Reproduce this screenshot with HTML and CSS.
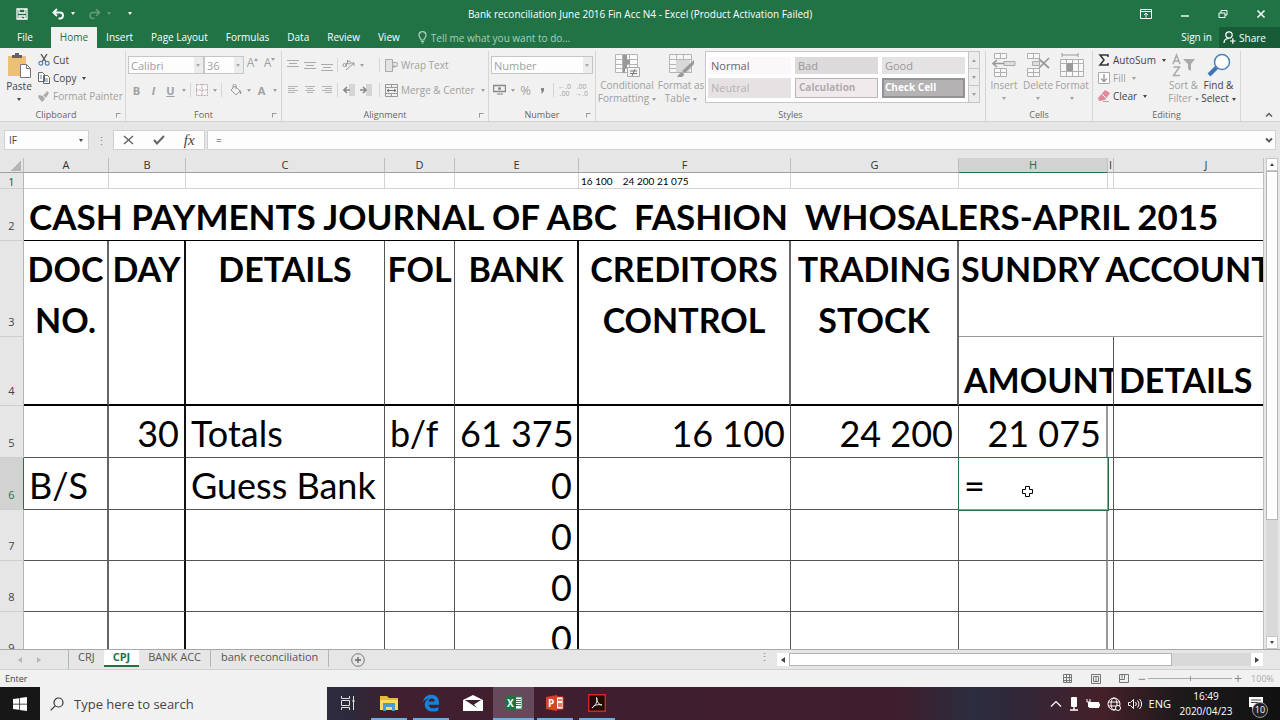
FILE: index.html
```html
<!DOCTYPE html>
<html lang="en">
<head>
    <meta charset="UTF-8">
    <meta name="viewport" content="width=device-width, initial-scale=1.0">
    <title>Bank reconciliation June 2016 Fin Acc N4 - Excel</title>
    <link rel="stylesheet" href="styles.css">
</head>
<body>
    <!-- Title bar -->
    <header class="titlebar">
        <div class="quick">
            <button aria-label="Save"><svg width="12" height="12" viewBox="0 0 12 12"><path d="M1 1h10v10H1z M3 1v4h6V1 M3 11V8h6v3 M5 9v2" fill="none" stroke="#fff" stroke-width="1.3"/></svg></button>
            <button aria-label="Undo" class="undo"><svg width="13" height="12" viewBox="0 0 13 12"><path d="M1.500 4.500h6.500a3 3 0 0 1 0 6H6.500M5 1L1.500 4.500L5 8" fill="none" stroke="#fff" stroke-width="1.900"/></svg><span class="caret"></span></button>
            <button aria-label="Redo" class="faded"><svg width="13" height="12" viewBox="0 0 13 12"><path d="M11.500 4.500H5a3 3 0 0 0 0 6h1.500M8 1l3.500 3.500L8 8" fill="none" stroke="#fff" stroke-width="1.500"/></svg><span class="caret"></span></button>
            <button aria-label="Customize toolbar" class="custom"><span class="caret"></span></button>
        </div>
        <div class="doc-title">Bank reconciliation June 2016 Fin Acc N4 - Excel (Product Activation Failed)</div>
        <div class="window-buttons">
            <button aria-label="Ribbon options"><svg width="12" height="10" viewBox="0 0 12 10"><path d="M.5.5h11v9H.5zM.5 2.500h11M6 8.500V4M4 6l2-2 2 2" fill="none" stroke="#fff"/></svg></button>
            <button aria-label="Minimize"><svg width="10" height="10" viewBox="0 0 10 10"><path d="M1 7h8" stroke="#fff" stroke-width="1.400"/></svg></button>
            <button aria-label="Restore"><svg width="10" height="10" viewBox="0 0 10 10"><path d="M1 4h6v4.500H1zM3 4V1.500h6V6H7" fill="none" stroke="#fff"/></svg></button>
            <button aria-label="Close"><svg width="10" height="10" viewBox="0 0 10 10"><path d="M1.500 1.500l7 7M8.500 1.500l-7 7" stroke="#fff" stroke-width="1.500"/></svg></button>
        </div>
    </header>

    <!-- Ribbon tabs -->
    <nav class="tabs">
        <a href="#" class="file">File</a>
        <a href="#" class="active">Home</a>
        <a href="#">Insert</a>
        <a href="#">Page Layout</a>
        <a href="#">Formulas</a>
        <a href="#">Data</a>
        <a href="#">Review</a>
        <a href="#">View</a>
        <label class="tell-me">
            <svg width="9" height="13" viewBox="0 0 9 13"><path d="M3 9C3 7 1 6.500 1 4.200a3.500 3.500 0 0 1 7 0C8 6.500 6 7 6 9zM3 10.500h3M3.500 12h2" fill="none" stroke="#a9cfb9" stroke-width="1.200"/></svg>
            <input type="text" placeholder="Tell me what you want to do...">
        </label>
        <a href="#" class="sign-in">Sign in</a>
        <button class="share"><svg width="13" height="13" viewBox="0 0 13 13"><circle cx="6" cy="4" r="3.200" fill="none" stroke="#fff" stroke-width="1.200"/><path d="M1 12c0-3 1.500-4.500 5-4.500M7 10h5.500M9.800 7.300v5.400" fill="none" stroke="#fff" stroke-width="1.200"/></svg>Share</button>
    </nav>

    <!-- Ribbon -->
    <section class="ribbon">
        <div class="group clipboard">
            <div class="group-body">
                <button class="big">
                    <svg width="25" height="27" viewBox="0 0 25 27"><path d="M1 4h18v20H1z" fill="#ecc173"/><path d="M5 3h3V1h4v2h3v3H5z" fill="#66615d"/><path d="M13.500 12.500h6l4 4v9h-10z" fill="#fff" stroke="#777"/><path d="M19.500 12.500v4h4" fill="none" stroke="#777"/></svg>
                    <span>Paste</span><span class="caret"></span>
                </button>
                <div class="stack">
                    <button><svg width="12" height="12" viewBox="0 0 12 12"><path d="M3 0l5 8M9 0L4 8" stroke="#555" stroke-width="1.400"/><circle cx="2.800" cy="9.300" r="1.900" fill="none" stroke="#5b84b1" stroke-width="1.200"/><circle cx="9.200" cy="9.300" r="1.900" fill="none" stroke="#5b84b1" stroke-width="1.200"/></svg>Cut</button>
                    <button><svg width="12" height="12" viewBox="0 0 12 12"><path d="M.5.5h4l2 2v7h-6zM5.500 3.500h4l2 2v6h-6z" fill="#fff" stroke="#666"/><path d="M2 4h2M2 6h2M7 7h3M7 9h3" stroke="#5b84b1"/></svg>Copy<span class="caret"></span></button>
                    <button disabled><svg width="12" height="12" viewBox="0 0 12 12"><path d="M1 5l4 1 2 3-3 3-4-5zM5 5l3 3 1-2L11 3 9 1 7 4z" fill="#aaa"/></svg>Format Painter</button>
                </div>
            </div>
            <div class="group-name">Clipboard<i class="launcher"></i></div>
        </div>

        <div class="group font dim">
            <div class="group-body rows">
                <div class="line">
                    <span class="picker font-name"><select aria-label="Font" disabled><option>Calibri</option></select></span>
                    <span class="picker font-size"><select aria-label="Font size" disabled><option>36</option></select></span>
                    <button class="tool grow" disabled>A<i class="caret up"></i></button>
                    <button class="tool grow" disabled>A<i class="caret"></i></button>
                </div>
                <div class="line">
                    <button class="tool" disabled><b>B</b></button>
                    <button class="tool" disabled><b><i>I</i></b></button>
                    <button class="tool" disabled><b><u>U</u></b></button>
                    <span class="caret"></span>
                    <span class="rule"></span>
                    <button class="tool" disabled aria-label="Borders"><svg width="12" height="12" viewBox="0 0 12 12"><path d="M.5.5h11v11H.5zM6 0v12M0 6h12" fill="#faf4f6" stroke="#b9a9ae" stroke-dasharray="2 1"/></svg></button>
                    <span class="caret"></span>
                    <span class="rule"></span>
                    <button class="tool fill" disabled aria-label="Fill colour"><svg width="12" height="12" viewBox="0 0 12 12"><path d="M5 2l5 5-4 4-5-5zM3 4V1.500a1.500 1.500 0 0 1 3 0V5" fill="none" stroke="#999"/><path d="M10 6c2 2 1.500 4 .5 4s-1-1-.5-4z" fill="#999"/></svg></button>
                    <span class="caret"></span>
                    <button class="tool" disabled><b>A</b></button>
                    <span class="caret"></span>
                </div>
            </div>
            <div class="group-name">Font<i class="launcher"></i></div>
        </div>

        <div class="group alignment dim">
            <div class="group-body rows">
                <div class="line">
                    <button class="tool" disabled aria-label="Top align"><svg width="12" height="12" viewBox="0 0 12 12"><path d="M0 1.500h12M2 4.500h8M0 7.500h12" stroke="#aaa"/></svg></button>
                    <button class="tool" disabled aria-label="Middle align"><svg width="12" height="12" viewBox="0 0 12 12"><path d="M0 3.500h12M2 6.500h8M0 9.500h12" stroke="#aaa"/></svg></button>
                    <button class="tool" disabled aria-label="Bottom align"><svg width="12" height="12" viewBox="0 0 12 12"><path d="M0 5.500h12M2 8.500h8M0 11.500h12" stroke="#aaa"/></svg></button>
                    <span class="rule"></span>
                    <button class="tool" disabled aria-label="Orientation"><svg width="13" height="12" viewBox="0 0 13 12"><path d="M4 11l8-7M9 4h3v3" fill="none" stroke="#999"/><circle cx="2.500" cy="6" r="1.500" fill="none" stroke="#999"/><path d="M4.500 4v3.500M5.500 1v4" stroke="#999"/><circle cx="7" cy="3.500" r="1.500" fill="none" stroke="#999"/></svg></button>
                    <span class="caret"></span>
                    <span class="rule wide"></span>
                    <button class="text-tool" disabled><svg width="13" height="13" viewBox="0 0 13 13"><path d="M.5.5h7v12h-7zM7.500 3.500H11a1.500 1.500 0 0 1 0 4H8M9.500 6L8 7.500 9.500 9" fill="#e3e3e3" stroke="#aaa"/></svg>Wrap Text</button>
                </div>
                <div class="line">
                    <button class="tool" disabled aria-label="Align left"><svg width="12" height="12" viewBox="0 0 12 12"><path d="M1 2.500h10M1 4.500h7M1 6.500h10M1 8.500h7" stroke="#b5b5b5"/></svg></button>
                    <button class="tool" disabled aria-label="Center"><svg width="12" height="12" viewBox="0 0 12 12"><path d="M1 2.500h10M3 4.500h6M1 6.500h10M3 8.500h6" stroke="#b5b5b5"/></svg></button>
                    <button class="tool" disabled aria-label="Align right"><svg width="12" height="12" viewBox="0 0 12 12"><path d="M1 2.500h10M4 4.500h7M1 6.500h10M4 8.500h7" stroke="#b5b5b5"/></svg></button>
                    <span class="rule"></span>
                    <button class="tool" disabled aria-label="Decrease indent"><svg width="12" height="12" viewBox="0 0 12 12"><path d="M6 0h6v12H6z" fill="#d5d5d5"/><path d="M7 6H1M4 3L1 6l3 3" fill="none" stroke="#888" stroke-width="1.600"/></svg></button>
                    <button class="tool" disabled aria-label="Increase indent"><svg width="12" height="12" viewBox="0 0 12 12"><path d="M6 0h6v12H6z" fill="#d5d5d5"/><path d="M0 6h6M3 3l3 3-3 3" fill="none" stroke="#888" stroke-width="1.600"/></svg></button>
                    <span class="rule after-indent"></span>
                    <button class="text-tool" disabled><svg width="13" height="13" viewBox="0 0 13 13"><path d="M.5.5h12v12H.5zM.5 3.500h12M.5 9.500h12M6.500.5v3M6.500 9.500v3" fill="none" stroke="#999"/><path d="M2 6.500h9M4 5L2 6.500 4 8M9 5l2 1.500L9 8" fill="none" stroke="#777"/></svg>Merge &amp; Center<span class="caret"></span></button>
                </div>
            </div>
            <div class="group-name">Alignment<i class="launcher"></i></div>
        </div>

        <div class="group number dim">
            <div class="group-body rows">
                <div class="line"><span class="picker format"><select aria-label="Number format" disabled><option>Number</option></select></span></div>
                <div class="line">
                    <button class="tool" disabled aria-label="Currency"><svg width="13" height="12" viewBox="0 0 13 12"><path d="M.5 1.500h12v6H.5z" fill="none" stroke="#888" stroke-width="1.400"/><circle cx="6.500" cy="4.500" r="1.500" fill="#888"/><path d="M4 9h6v2H4z" fill="#bbb"/></svg></button>
                    <span class="caret"></span>
                    <button class="tool percent" disabled>%</button>
                    <button class="tool" disabled aria-label="Comma style"><svg width="5" height="7" viewBox="0 0 5 7"><path d="M1 1h3v3L2 6.500H1L2 4H1z" fill="#888"/></svg></button>
                    <span class="rule"></span>
                    <button class="tool decimals" disabled><span>←.0</span><span>.00</span></button>
                    <button class="tool decimals" disabled><span>.00</span><span>→.0</span></button>
                </div>
            </div>
            <div class="group-name">Number<i class="launcher"></i></div>
        </div>

        <div class="group styles dim">
            <div class="group-body">
                <button class="big cond" disabled>
                    <svg width="25" height="25" viewBox="0 0 25 25"><path d="M.5 1.500h22v18H.5zM.5 6.500h22M.5 11.500h22M.5 15.500h22M7.500 1v19M14.500 1v19" fill="#fafafa" stroke="#b5b5b5"/><path d="M8 2h4v5h3v4h-3v4h-2v5H8z" fill="#999"/><path d="M12.500 14.500h12v9h-12z" fill="#f4f4f4" stroke="#aaa"/><path d="M15 18h7M15 20.500h7M20 16l-3 7" stroke="#777"/></svg>
                    <span>Conditional<br>Formatting<i class="caret"></i></span>
                </button>
                <button class="big table-style" disabled>
                    <svg width="25" height="25" viewBox="0 0 25 25"><path d="M.5 1.500h22v18H.5zM.5 6.500h22M.5 11.500h22M.5 15.500h22M7.500 1v19M14.500 1v19" fill="#f6f6f6" stroke="#b5b5b5"/><path d="M7 7h14v12H7z" fill="#d8d8d8"/><path d="M25 7v4l-9 9-3-2zM8 24c2-4 4-5 6-4s1 3-1 4z" fill="#999"/></svg>
                    <span>Format as<br>Table<i class="caret"></i></span>
                </button>
                <div class="gallery">
                    <div class="swatches">
                        <button class="normal">Normal</button>
                        <button class="bad">Bad</button>
                        <button class="good">Good</button>
                        <button class="neutral">Neutral</button>
                        <button class="calculation">Calculation</button>
                        <button class="check">Check Cell</button>
                    </div>
                    <div class="gallery-scroll">
                        <button aria-label="Up"><i class="caret up"></i></button>
                        <button aria-label="Down"><i class="caret"></i></button>
                        <button aria-label="More"><i class="caret"></i></button>
                    </div>
                </div>
            </div>
            <div class="group-name">Styles</div>
        </div>

        <div class="group cells dim">
            <div class="group-body">
                <button class="big" disabled>
                    <svg width="24" height="25" viewBox="0 0 24 25"><path d="M2.500.5h12v5h-12zM8.500.5v5M2.500 15.500h12v8h-12zM8.500 15.500v8M2.500 19.500h12" fill="#f8f8f8" stroke="#b0b0b0"/><path d="M12 8.500h11v4H12z" fill="#ddd" stroke="#aaa"/><path d="M12 10.500H2M5 7l-4 3.500L5 14" fill="none" stroke="#999" stroke-width="1.600"/></svg>
                    <span>Insert</span><span class="caret"></span>
                </button>
                <button class="big" disabled>
                    <svg width="24" height="25" viewBox="0 0 24 25"><path d="M1.500.5h12v5h-12zM7.500.5v5M1.500 15.500h12v8h-12zM7.500 15.500v8M1.500 19.500h12" fill="#f8f8f8" stroke="#b0b0b0"/><path d="M6.500 8.500h7v4h-7z" fill="#ddd" stroke="#aaa"/><path d="M13 6l10 9M23 5L13 15" stroke="#999" stroke-width="1.700"/></svg>
                    <span>Delete</span><span class="caret"></span>
                </button>
                <button class="big" disabled>
                    <svg width="24" height="25" viewBox="0 0 24 25"><path d="M.5 6.500h23v17H.5zM.5 10.500h23M.5 18.500h23M6.500 6.500v17M12.500 6.500v17M18.500 6.500v17" fill="#f8f8f8" stroke="#b0b0b0"/><path d="M7 10h6v8H7z" fill="#999"/><path d="M2 2h16M2 0v4M18 0v4" stroke="#999"/></svg>
                    <span>Format</span><span class="caret"></span>
                </button>
            </div>
            <div class="group-name">Cells</div>
        </div>

        <div class="group editing">
            <div class="group-body">
                <div class="stack">
                    <button><svg width="12" height="12" viewBox="0 0 12 12"><path d="M10 3V1H2l4 5-4 5h8V9" fill="none" stroke="#333" stroke-width="1.500"/></svg>AutoSum<span class="caret"></span></button>
                    <button disabled><svg width="12" height="12" viewBox="0 0 12 12"><path d="M.5.5h11v11H.5z" fill="#fff" stroke="#aaa"/><path d="M6 2v7M3 6.500l3 3 3-3" fill="none" stroke="#999" stroke-width="1.400"/></svg>Fill<span class="caret"></span></button>
                    <button><svg width="12" height="12" viewBox="0 0 12 12"><path d="M7 0l5 3-5 7-6 1-1-3z" fill="#e08a9c"/><path d="M4 4l4 4" stroke="#fff"/><path d="M5 11.500h6" stroke="#aaa"/></svg>Clear<span class="caret"></span></button>
                </div>
                <button class="big sort" disabled>
                    <svg width="24" height="25" viewBox="0 0 24 25"><path d="M1 11L4.500 2 8 11M2.200 8h4.600M1.500 14h6l-6 8.500h6.500" fill="none" stroke="#aaa" stroke-width="1.500"/><path d="M11 6h12l-4 5v7l-3-2v-5z" fill="#aaa"/></svg>
                    <span>Sort &amp;<br>Filter<i class="caret"></i></span>
                </button>
                <button class="big find">
                    <svg width="24" height="25" viewBox="0 0 24 25"><path d="M10 14L2 22" stroke="#3f77b5" stroke-width="4"/><circle cx="15" cy="9" r="7.500" fill="#fff" stroke="#4a80bb" stroke-width="1.500"/></svg>
                    <span>Find &amp;<br>Select<i class="caret"></i></span>
                </button>
            </div>
            <div class="group-name">Editing</div>
        </div>
        <button class="collapse" aria-label="Collapse ribbon"><svg width="8" height="6" viewBox="0 0 8 6"><path d="M1 4.500l3-3 3 3" fill="none" stroke="#555" stroke-width="1.400"/></svg></button>
    </section>

    <!-- Formula bar -->
    <section class="formula-bar">
        <div class="name-box"><input type="text" aria-label="Name box" value="IF"><span class="caret"></span></div>
        <span class="grip">⋮</span>
        <div class="formula-buttons">
            <button aria-label="Cancel"><svg width="11" height="10" viewBox="0 0 11 10"><path d="M1 1l9 8M10 1L1 9" stroke="#666" stroke-width="1.500"/></svg></button>
            <button aria-label="Enter"><svg width="12" height="10" viewBox="0 0 12 10"><path d="M1 5l3 3.500L11 1" fill="none" stroke="#666" stroke-width="2"/></svg></button>
            <button class="fx"><i>fx</i></button>
        </div>
        <div class="formula"><input type="text" aria-label="Formula" value="="><svg width="8" height="6" viewBox="0 0 8 6"><path d="M1 1.500l3 3 3-3" fill="none" stroke="#555" stroke-width="1.800"/></svg></div>
    </section>

    <!-- Worksheet -->
    <main class="sheet">
        <div class="grid">
            <table>
                <colgroup>
                    <col class="c-head"><col class="c-a"><col class="c-b"><col class="c-c"><col class="c-d"><col class="c-e"><col class="c-f"><col class="c-g"><col class="c-h"><col class="c-i"><col>
                </colgroup>
                <thead>
                    <tr><th class="corner"></th><th>A</th><th>B</th><th>C</th><th>D</th><th>E</th><th>F</th><th>G</th><th class="on">H</th><th>I</th><th>J</th></tr>
                </thead>
                <tbody>
                    <tr class="r1"><th>1</th><td></td><td></td><td></td><td></td><td></td><td>16 100    24 200 21 075</td><td></td><td></td><td></td><td></td></tr>
                    <tr class="r2"><th>2</th><td colspan="10">CASH PAYMENTS JOURNAL OF ABC  FASHION  WHOSALERS-APRIL 2015</td></tr>
                    <tr class="r3"><th>3</th><td rowspan="2" class="gray">DOC<br>NO.</td><td rowspan="2" class="thick">DAY</td><td rowspan="2">DETAILS</td><td rowspan="2">FOL</td><td rowspan="2" class="thick">BANK</td><td rowspan="2" class="gray">CREDITORS<br>CONTROL</td><td rowspan="2" class="gray">TRADING<br>STOCK</td><td colspan="3" class="sundry">SUNDRY ACCOUNTS</td></tr>
                    <tr class="r4"><th>4</th><td colspan="2">AMOUNT</td><td>DETAILS</td></tr>
                    <tr class="tall"><th>5</th><td class="gray"></td><td class="num thick">30</td><td>Totals</td><td>b/f</td><td class="num thick">61 375</td><td class="num">16 100</td><td class="num">24 200</td><td class="num double">21 075</td><td></td><td></td></tr>
                    <tr class="tall"><th class="on">6</th><td class="gray">B/S</td><td class="thick"></td><td>Guess Bank</td><td></td><td class="num thick">0</td><td></td><td></td><td class="editing-cell">=<svg class="pointer" width="11" height="11" viewBox="0 0 11 11"><path d="M3.500.5h4v3h3v4h-3v3h-4v-3h-3v-4h3z" fill="#fff" stroke="#000"/></svg></td><td></td><td></td></tr>
                    <tr><th>7</th><td class="gray"></td><td class="thick"></td><td></td><td></td><td class="num thick">0</td><td></td><td></td><td class="double"></td><td></td><td></td></tr>
                    <tr><th>8</th><td class="gray"></td><td class="thick"></td><td></td><td></td><td class="num thick">0</td><td></td><td></td><td class="double"></td><td></td><td></td></tr>
                    <tr><th>9</th><td class="gray"></td><td class="thick"></td><td></td><td></td><td class="num thick">0</td><td></td><td></td><td class="double"></td><td></td><td></td></tr>
                </tbody>
            </table>
        </div>
        <div class="vscroll">
            <button aria-label="Scroll up"><i class="caret up"></i></button>
            <div class="vtrack"><div class="vthumb"></div></div>
            <button aria-label="Scroll down"><i class="caret"></i></button>
        </div>
    </main>

    <!-- Sheet tabs -->
    <footer class="sheet-tabs">
        <span class="nav-arrows"><i class="tri left"></i><i class="tri right"></i></span>
        <a href="#">CRJ</a>
        <a href="#" class="active">CPJ</a>
        <a href="#">BANK ACC</a>
        <a href="#" class="rec">bank reconciliation</a>
        <button class="add" aria-label="New sheet"><svg width="14" height="14" viewBox="0 0 14 14"><circle cx="7" cy="7" r="6.300" fill="none" stroke="#777"/><path d="M4 7h6M7 4v6" stroke="#666" stroke-width="1.300"/></svg></button>
        <span class="grip">⋮</span>
        <div class="hscroll">
            <button aria-label="Scroll left"><i class="tri left"></i></button>
            <div class="htrack"><div class="hthumb"></div></div>
            <button aria-label="Scroll right"><i class="tri right"></i></button>
        </div>
    </footer>

    <!-- Status bar -->
    <div class="status">
        <span class="mode">Enter</span>
        <button aria-label="Normal view"><svg width="10" height="10" viewBox="0 0 10 10"><path d="M.5.5h8v8h-8zM3.500.5v8M6.500.5v8M.5 3.500h8M.5 6.500h8" fill="none" stroke="#777"/></svg></button>
        <button aria-label="Page layout"><svg width="10" height="10" viewBox="0 0 10 10"><path d="M.5.5h9v9h-9zM2.500 2.500h5v5h-5zM4 4h2M4 6h2" fill="none" stroke="#777"/></svg></button>
        <button aria-label="Page break"><svg width="10" height="10" viewBox="0 0 10 10"><path d="M.5.5h9v8h-9zM.5 5.500h5M5.500 5.500v-5M3 .5v4" fill="none" stroke="#777"/></svg></button>
        <div class="zoom"><span>−</span><input type="range" aria-label="Zoom" min="10" max="190" value="100" disabled><span>+</span></div>
        <span class="percent-label">100%</span>
    </div>

    <!-- Windows taskbar -->
    <div class="taskbar">
        <button class="start" aria-label="Start"><svg width="14" height="14" viewBox="0 0 14 14"><path d="M0 2l6-.8v5.500H0zM6.700 1L14 0v6.700H6.700zM0 7.400h6v5.400L0 12zM6.700 7.400H14V14l-7.300-1z" fill="#fff"/></svg></button>
        <label class="search">
            <svg width="14" height="14" viewBox="0 0 14 14"><circle cx="8.500" cy="5.500" r="4.500" fill="none" stroke="#333" stroke-width="1.200"/><path d="M5.300 8.700L.7 13.300" stroke="#333" stroke-width="1.200"/></svg>
            <input type="text" placeholder="Type here to search">
        </label>
        <button class="app" aria-label="Task view"><svg width="15" height="14" viewBox="0 0 15 14"><path d="M1.500 0v2.500h8V0M1.500 4.500h8v5h-8zM1.500 14v-2.500h8V14M13.500 0v14M12 5h3" fill="none" stroke="#ddd"/></svg></button>
        <button class="app open" aria-label="File Explorer"><svg width="20" height="18" viewBox="0 0 20 18"><path d="M1 2h7l2 2h9v12H1z" fill="#e9b83f"/><path d="M1 6h18v10H1z" fill="#fbd867"/><path d="M4 17V9h12v8h-3v-4H7v4z" fill="#4b9bd0"/></svg></button>
        <button class="app open" aria-label="Edge"><svg width="18" height="18" viewBox="0 0 18 18"><path d="M1 8C2 3 5 .7 9.300.7c5 0 7.700 3.500 7.700 8v2H6.500c.3 2.500 2.300 3.600 4.800 3.600 2 0 3.500-.5 5-1.400v3.500c-1.600.8-3.300 1.200-5.500 1.200-5 0-8-2.700-8-7C2.800 7.700 4.500 5.500 7 4.500 4.500 4.700 2.500 5.800 1 8zM6.500 7.600h6.200c0-2-1-3.200-3-3.200-1.800 0-2.900 1.200-3.200 3.200z" fill="#1683d8"/></svg></button>
        <button class="app" aria-label="Mail"><svg width="20" height="16" viewBox="0 0 20 16"><path d="M0 5l10-5 10 5v11H0z" fill="#fff"/><path d="M2 5h16l-7 4.500L14 13z" fill="#3d1f2c"/></svg></button>
        <button class="app open current" aria-label="Excel"><svg width="18" height="16" viewBox="0 0 18 16"><path d="M9 2h8v12H9z" fill="#fff" stroke="#2a8755"/><path d="M11 4.500h5M11 6.500h5M11 8.500h5M11 10.500h5" stroke="#2a8755"/><path d="M0 2l11-2v16L0 14z" fill="#1e7245"/><text x="2" y="12" font-size="10" font-weight="bold" fill="#fff">X</text></svg></button>
        <button class="app open" aria-label="PowerPoint"><svg width="18" height="16" viewBox="0 0 18 16"><path d="M9 2h8v12H9z" fill="#fff" stroke="#d9512c"/><path d="M12 5h4M12 9h4M12 11h4" stroke="#d9512c" stroke-width="1.500"/><path d="M0 2l11-2v16L0 14z" fill="#d24726"/><text x="2" y="12" font-size="10" font-weight="bold" fill="#fff">P</text></svg></button>
        <button class="app open" aria-label="Acrobat"><svg width="18" height="18" viewBox="0 0 18 18"><path d="M.7.7h16.600v16.600H.7z" fill="#260a0a" stroke="#d0261f" stroke-width="1.400"/><path d="M8.500 3.500c1.500 4-1 8-4.500 10.500 1.500-3 6-4 10-3-3 0-5-3-5.500-7.500z" fill="none" stroke="#eee"/></svg></button>
        <div class="tray">
            <svg width="12" height="12" viewBox="0 0 12 12"><path d="M1 8.500l5-5 5 5" fill="none" stroke="#fff" stroke-width="1.200"/></svg>
            <svg width="10" height="14" viewBox="0 0 10 14"><rect x="2" y="0" width="6" height="10" rx="1" fill="#fff"/><path d="M5 10v3M1 13h8" stroke="#fff" stroke-width="1.400"/></svg>
            <svg width="14" height="12" viewBox="0 0 14 12"><path d="M3 4h10v6H3z" fill="#fff"/><path d="M13.500 5.500v3M1 1v3h3V1M2.500 4v5" fill="none" stroke="#fff"/></svg>
            <svg width="14" height="14" viewBox="0 0 14 14"><circle cx="7" cy="7" r="6" fill="none" stroke="#fff"/><ellipse cx="7" cy="7" rx="3" ry="6" fill="none" stroke="#fff"/><path d="M1 5h12M1 9h12" stroke="#fff"/><circle cx="11" cy="11" r="2.500" fill="#2a1a20" stroke="#fff"/></svg>
            <svg width="14" height="12" viewBox="0 0 14 12"><path d="M.5 4.500h2L5.500 1.500v9l-3-3h-2zM7.500 4a3 3 0 0 1 0 4M9.500 2.500a5 5 0 0 1 0 7M11.500 1a7 7 0 0 1 0 10" fill="none" stroke="#fff"/></svg>
            <span>ENG</span>
        </div>
        <div class="clock">16:49<br>2020/04/23</div>
        <button class="notices" aria-label="Notifications"><svg width="14" height="13" viewBox="0 0 14 13"><path d="M0 0h14v10H6l-3 3v-3H0z" fill="#fff"/><path d="M2 3h10M2 5.500h10" stroke="#444"/></svg><span class="count">10</span></button>
    </div>
</body>
</html>
```

FILE: styles.css
```css
* {
    box-sizing: border-box;
}
body {
    margin: 0;
    height: 100vh;
    display: flex;
    flex-direction: column;
    overflow: hidden;
    font-family: "Open Sans", "Noto Sans", sans-serif;
    font-size: 10px;
    color: #444;
    background: #e6e6e6;
}
button, input, select {
    font: inherit;
    color: inherit;
    background: none;
    border: none;
    border-radius: 0;
    margin: 0;
    padding: 0;
    opacity: 1;
}
button {
    display: flex;
    align-items: center;
    justify-content: center;
    white-space: nowrap;
}
input {
    outline: none;
    min-width: 0;
}
a {
    color: inherit;
    text-decoration: none;
}
svg {
    flex: none;
    display: block;
}
.caret {
    display: inline-block;
    flex: none;
    border: 2px solid transparent;
    border-top: 3px solid currentColor;
    border-bottom: none;
}
.caret.up {
    border-top: none;
    border-bottom: 3px solid currentColor;
}

/* title bar */
.titlebar {
    display: grid;
    grid-template-columns: 1fr auto 1fr;
    align-items: center;
    height: 27px;
    flex: none;
    background: #217346;
    color: #fff;
}
.quick {
    display: flex;
    align-items: center;
    padding-left: 16px;
    gap: 13px;
}
.quick button {
    gap: 6px;
}
.quick .undo {
    margin-left: 11px;
}
.quick .custom {
    margin-left: 4px;
}
.quick .faded {
    opacity: 0.3;
}
.window-buttons {
    display: flex;
    justify-content: flex-end;
    gap: 28px;
    padding-right: 14px;
}

/* ribbon tabs */
.tabs {
    display: flex;
    height: 21px;
    flex: none;
    background: #217346;
    color: #fff;
    line-height: 20px;
}
.tabs > a {
    padding: 0 9px;
}
.tabs .file {
    padding: 0 18px 0 17px;
}
.tabs .active {
    background: #f1f1f1;
    color: #217346;
}
.tell-me {
    display: flex;
    align-items: center;
    flex: 1;
    gap: 4px;
    padding-left: 9px;
}
.tell-me input {
    width: 200px;
}
.tell-me input::placeholder {
    color: #a9cfb9;
    opacity: 1;
}
.tabs .sign-in {
    padding: 0 7px;
}
.share {
    width: 61px;
    gap: 3px;
    padding-right: 10px;
    background: #185c37;
}

/* ribbon */
.ribbon {
    display: flex;
    height: 74px;
    flex: none;
    background: #f1f1f1;
    border-bottom: 1px solid #d2d2d2;
    line-height: 13px;
}
.group {
    display: flex;
    flex-direction: column;
    flex: none;
    margin-top: 3px;
    border-right: 1px solid #d6d6d6;
}
.group-body {
    flex: 1;
    display: flex;
}
.group-name {
    position: relative;
    text-align: center;
    font-size: 9px;
    color: #666;
}
.launcher {
    position: absolute;
    right: 4px;
    top: 5px;
    width: 5px;
    height: 5px;
    border: 1px solid #999;
    border-right-color: transparent;
    border-bottom-color: transparent;
}
.dim, .ribbon button:disabled {
    color: #a0a0a0;
}
.clipboard {
    width: 126px;
}
.clipboard .group-name {
    padding-right: 13px;
}
.font {
    width: 156px;
}
.alignment {
    width: 207px;
}
.number {
    width: 107px;
}
.styles {
    width: 390px;
}
.cells {
    width: 107px;
}
.editing {
    width: 148px;
}
.big {
    flex: none;
    flex-direction: column;
    justify-content: flex-start;
    width: 34px;
    padding-top: 2px;
    gap: 1px;
    text-align: center;
}
.big > .caret {
    margin-top: 4px;
}
.big span .caret {
    margin-left: 3px;
    vertical-align: middle;
}
.clipboard .big {
    width: 38px;
    padding-top: 1px;
}
.stack {
    display: flex;
    flex-direction: column;
}
.stack button {
    height: 18px;
    gap: 3px;
    justify-content: flex-start;
}
.stack .caret {
    margin-left: 3px;
}
.rows {
    flex-direction: column;
    padding: 4px 2px 0;
    gap: 5px;
}
.line {
    display: flex;
    align-items: center;
    height: 20px;
}
.line > .caret {
    margin: 0 2px 0 3px;
}
.tool {
    width: 17px;
    height: 18px;
    flex: none;
    font-size: 11px;
}
.grow {
    align-items: flex-start;
    font-size: 12px;
}
.grow .caret {
    margin-top: 2px;
}
.fill {
    margin-left: 3px;
}
.rule {
    width: 1px;
    height: 14px;
    margin: 0 2px;
    background: #d6d6d6;
}
.rule.wide {
    margin: 0 4px 0 13px;
}
.rule.after-indent {
    margin: 0 4px 0 5px;
}
.picker {
    position: relative;
    display: flex;
    height: 18px;
    border: 1px solid #c6c6c6;
    background: #fdfdfd;
}
.picker::after {
    content: "";
    position: absolute;
    right: 3px;
    top: 7px;
    border: 2px solid transparent;
    border-top: 3px solid #aaa;
    border-bottom: none;
}
.picker select {
    appearance: none;
    width: 100%;
    padding-left: 2px;
    font-size: 11px;
    color: #a0a0a0;
    background: linear-gradient(to left, #ececec 9px, transparent 9px);
}
.font-name {
    width: 76px;
}
.font-size {
    width: 40px;
}
.format {
    flex: 1;
}
.text-tool {
    gap: 3px;
    padding-left: 1px;
}
.text-tool .caret {
    margin-left: 3px;
}
.percent {
    font-size: 13px;
}
.decimals {
    flex-direction: column;
    font-size: 7px;
    line-height: 7px;
}
.styles .big {
    width: 46px;
}
.styles .cond {
    width: 62px;
}
.gallery {
    display: flex;
    height: 52px;
    margin-left: auto;
    margin-right: 5px;
    border: 1px solid #c6c6c6;
    background: #fff;
}
.styles .gallery {
    width: 275px;
}
.swatches {
    flex: 1;
    display: grid;
    grid-template-columns: repeat(3, 1fr);
    gap: 4px;
    padding: 5px 3px 4px 2px;
}
.swatches button {
    justify-content: flex-start;
    padding-left: 3px;
    font-size: 11px;
}
.normal {
    color: #666;
    background: #faf8f9;
}
.bad {
    color: #999;
    background: #dcdadb;
}
.good {
    color: #999;
    background: #e4e2e3;
}
.neutral {
    color: #b5b0b2;
    background: #e6e2e4;
}
.swatches .calculation {
    color: #b0abad;
    font-size: 10px;
    font-weight: bold;
    background: #f0eaed;
    border: 1px solid #b8b4b6;
}
.swatches .check {
    padding-left: 1px;
    color: #fff;
    font-size: 10px;
    font-weight: bold;
    background: #b5b2b4;
    border: 2px solid #959295;
}
.gallery-scroll {
    display: flex;
    flex-direction: column;
    width: 11px;
    border-left: 1px solid #c6c6c6;
    background: #ececec;
}
.gallery-scroll button {
    flex: 1;
}
.gallery-scroll button + button {
    border-top: 1px solid #c6c6c6;
}
.cells .group-body {
    padding-left: 1px;
}
.editing .stack {
    width: 73px;
    padding-left: 5px;
}
.editing .big {
    width: 35px;
}
.collapse {
    margin: auto 7px 3px auto;
}

/* formula bar */
.formula-bar {
    display: flex;
    align-items: center;
    height: 36px;
    flex: none;
    padding: 0 4px;
}
.name-box, .formula-buttons, .formula {
    display: flex;
    align-items: center;
    height: 20px;
    background: #fdfdfd;
    border: 1px solid #d0d0d0;
}
.name-box {
    width: 85px;
    padding: 0 5px 0 4px;
}
.name-box input, .formula input {
    flex: 1;
}
.grip {
    width: 24px;
    text-align: center;
    font-size: 11px;
    color: #888;
}
.formula-buttons {
    width: 92px;
    justify-content: space-around;
}
.fx {
    font: 15px "Liberation Serif", serif;
}
.formula {
    flex: 1;
    margin-left: 2px;
    padding: 0 2px 0 8px;
}

/* worksheet */
.sheet {
    flex: 1;
    min-height: 0;
    display: flex;
}
.grid {
    flex: 1;
    min-width: 0;
    overflow: hidden;
    border-right: 1px solid #c0c0c0;
}
/* last column runs on past the edge of the pane */
table {
    width: calc(100% + 36px);
    table-layout: fixed;
    border-collapse: separate;
    border-spacing: 0;
}
.c-head {
    width: 24px;
}
.c-a {
    width: 85px;
}
.c-b {
    width: 77px;
}
.c-c {
    width: 199px;
}
.c-d {
    width: 70px;
}
.c-e {
    width: 124px;
}
.c-f {
    width: 212px;
}
.c-g {
    width: 168px;
}
.c-h {
    width: 149px;
}
.c-i {
    width: 6px;
}
thead th {
    height: 15px;
    padding: 0;
    font-size: 11px;
    font-weight: normal;
    line-height: 14px;
    color: #333;
    border-right: 1px solid #bdbdbd;
    border-bottom: 1px solid #a0a0a0;
}
thead .on {
    color: #217346;
    background: #d2d2d2;
    border-bottom: 1px solid #217346;
}
.corner {
    background: linear-gradient(to bottom right, transparent 50%, #b5b5b5 50%) no-repeat 11px 3px / 10px 10px;
}
tbody tr {
    height: 51px;
}
tbody .tall {
    height: 52px;
}
tbody th {
    padding: 0 0 8px;
    font-size: 11px;
    font-weight: normal;
    line-height: 13px;
    vertical-align: bottom;
    background: #e6e6e6;
    border-right: 1px solid #b5b5b5;
    border-bottom: 1px solid #cfcfcf;
}
tbody th.on {
    color: #217346;
    background: #d2d2d2;
    border-right-color: #217346;
}
td {
    padding: 2px 5px 0;
    overflow: hidden;
    white-space: pre;
    font-family: Lato, sans-serif;
    font-size: 36px;
    line-height: 48px;
    color: #000;
    background: #fff;
    border-right: 1px solid #555;
    border-bottom: 1px solid #555;
}
td.thick {
    border-right: 2px solid #111;
}
td.gray {
    border-right: 2px solid #666;
}
td.double {
    border-right: 2px solid #999;
}
.num {
    text-align: right;
}
tbody .r1 {
    height: 16px;
}
.r1 th {
    padding: 0;
}
.r1 td {
    padding: 0 2px;
    font-size: 10px;
    line-height: 14px;
    border-color: #d4d4d4;
}
.r2 td, .r3 td, .r4 td {
    font-size: 34px;
    font-weight: bold;
}
tbody .r2 {
    height: 52px;
}
.r2 td {
    font-size: 35px;
    border-bottom: 1px solid #000;
}
tbody .r3 {
    height: 96px;
}
.r3 td {
    padding: 2px 0 0;
    line-height: 51px;
    text-align: center;
    vertical-align: top;
    border-bottom: 2px solid #000;
}
.r3 .sundry {
    padding-left: 2px;
    text-align: left;
    border-bottom: 1px solid #999;
}
tbody .r4 {
    height: 69px;
}
.r4 td {
    vertical-align: bottom;
    border-bottom: 2px solid #000;
}
.editing-cell {
    position: relative;
    outline: 1px solid #217346;
    border-color: #7fae93;
}
.pointer {
    position: absolute;
    left: 63px;
    top: 28px;
}
.vscroll {
    display: flex;
    flex-direction: column;
    width: 16px;
    padding: 0 2px;
}
.vscroll button {
    height: 13px;
    background: #fff;
    border: 1px solid #c6c6c6;
}
.vtrack {
    flex: 1;
    background: #d9d9d9;
}
.vthumb {
    height: 75%;
    background: #fff;
    border: 1px solid #b5b5b5;
}

/* sheet tabs */
.sheet-tabs {
    display: flex;
    height: 20px;
    flex: none;
    border-top: 1px solid #a8a8a8;
    font-size: 11px;
    line-height: 14px;
}
.sheet-tabs a {
    height: 17px;
    padding: 0 9px;
    color: #555;
}
.sheet-tabs .active {
    color: #217346;
    font-weight: bold;
    background: #fff;
    border-bottom: 2px solid #217346;
}
.sheet-tabs .rec {
    padding: 0 10px;
    border-left: 1px solid #b5b5b5;
    border-right: 1px solid #b5b5b5;
}
.nav-arrows {
    display: flex;
    align-items: center;
    justify-content: center;
    gap: 15px;
    width: 69px;
    padding-right: 10px;
    color: #b5b5b5;
    border-right: 1px solid #b5b5b5;
}
.tri {
    border: 3px solid transparent;
}
.tri.left {
    border-right: 4px solid currentColor;
    border-left: none;
}
.tri.right {
    border-left: 4px solid currentColor;
    border-right: none;
}
.add {
    margin-left: 22px;
    margin-right: auto;
}
.hscroll {
    display: flex;
    width: 38%;
    height: 13px;
    margin: 3px 17px 0 0;
}
.hscroll button {
    width: 12px;
    background: #fff;
}
.htrack {
    flex: 1;
    background: #d9d9d9;
}
.hthumb {
    width: 83%;
    height: 100%;
    background: #fff;
    border: 1px solid #b5b5b5;
}

/* status bar */
.status {
    display: flex;
    align-items: center;
    height: 18px;
    flex: none;
    padding: 0 6px 0 5px;
    background: #f1f1f1;
    border-top: 1px solid #d0d0d0;
    font-size: 9px;
}
.mode {
    margin-right: auto;
}
.status button {
    width: 28px;
}
.zoom {
    display: flex;
    align-items: center;
    gap: 2px;
    width: 104px;
    margin-right: 9px;
    font-size: 14px;
    line-height: 14px;
    color: #888;
}
.zoom input {
    flex: 1;
    appearance: none;
    height: 1px;
    background: #aaa;
}
.zoom input::-webkit-slider-thumb {
    appearance: none;
    width: 1px;
    height: 5px;
    background: #999;
}
.percent-label {
    color: #aaa;
}

/* taskbar */
.taskbar {
    display: flex;
    height: 33px;
    flex: none;
    color: #fff;
    background: linear-gradient(to right, #2c2a3c 27%, #401f2e 31%, #3f1d2d 70%, #2b2d3e 76%, #30283a 79%, #46202a 86%, #1e1a1c 92%, #111 100%);
}
.start {
    width: 40px;
    background: #171717;
}
.search {
    display: flex;
    align-items: center;
    gap: 10px;
    width: 287px;
    padding-left: 10px;
    font-size: 13px;
    color: #444;
    background: #f1f1f1;
}
.search input {
    flex: 1;
}
.search input::placeholder {
    color: #444;
    opacity: 1;
}
.app {
    width: 41px;
    border-bottom: 2px solid transparent;
}
.app.open {
    width: 36px;
    margin: 0 3px;
    border-bottom-color: #76a9e6;
}
.app.current {
    width: 41px;
    margin: 0;
    background: #66495a;
}
.tray {
    display: flex;
    align-items: center;
    gap: 7px;
    margin-left: auto;
}
.tray span {
    font-size: 11px;
}
.clock {
    width: 70px;
    line-height: 15px;
    padding-top: 2px;
    text-align: center;
}
.notices {
    position: relative;
    width: 39px;
    padding-right: 10px;
}
.count {
    position: absolute;
    right: 12px;
    bottom: 2px;
    width: 16px;
    height: 16px;
    border: 1px solid #999;
    border-radius: 50%;
    background: #222;
    font-size: 9px;
    line-height: 14px;
}
```
